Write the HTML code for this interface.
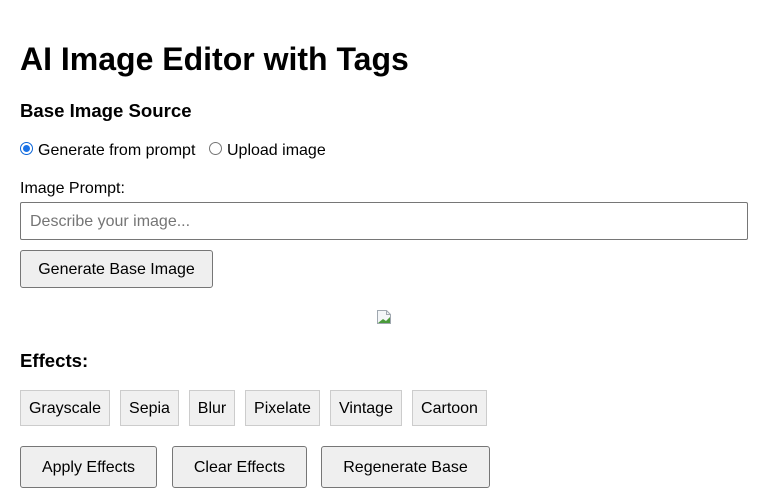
<!DOCTYPE html>
<html><head><meta charset="utf-8"><style>
*{box-sizing:border-box;margin:0;padding:0}
body{width:768px;height:480px;overflow:hidden;background:#fff;font-family:"Liberation Sans",Arial,sans-serif;color:#000;position:relative}
.a{position:absolute;white-space:nowrap}
h1{font-size:32px;font-weight:bold}
h2{font-size:18.6px;font-weight:bold}
.t{font-size:16px}
.btn{position:absolute;background:#efefef;border:1px solid #767676;border-radius:3px;font-size:16px;display:flex;align-items:center;justify-content:center;padding-top:2px}
.tag{position:absolute;background:#f0f0f0;border:1px solid #ccc;font-size:16px;display:flex;align-items:center;justify-content:center;top:390px;height:36px;padding-top:2px}
.radio{position:absolute;width:13px;height:13px;border-radius:50%;border:1px solid #767676;background:#fff}
</style></head><body>
<h1 class="a" style="left:20px;top:41px">AI Image Editor with Tags</h1>
<h2 class="a" style="left:20px;top:100px">Base Image Source</h2>
<div class="radio" style="left:20px;top:142px;border:1px solid #0b65d8;"><div style="position:absolute;left:2px;top:2px;width:7px;height:7px;border-radius:50%;background:#1a73e8"></div></div>
<div class="a t" style="left:38px;top:142px">Generate from prompt</div>
<div class="radio" style="left:209px;top:142px"></div>
<div class="a t" style="left:227px;top:142px">Upload image</div>
<div class="a t" style="left:20px;top:180px">Image Prompt:</div>
<div class="a" style="left:20px;top:202px;width:728px;height:38px;border:1px solid #767676;border-radius:2px"></div>
<div class="a t" style="left:30px;top:213px;color:#757575">Describe your image...</div>
<div class="btn" style="left:20px;top:250px;width:193px;height:38px">Generate Base Image</div>
<svg class="a" style="left:376px;top:309px" width="16" height="16" viewBox="0 0 16 16"><path d="M1.5 1.5h9l4 4v9h-13z" fill="#f4f6f8" stroke="#a0a8b0"/><path d="M2 14l5-4 3 2 4-4v6z" fill="#4a9a3a"/><path d="M10.5 1.5v4h4" fill="none" stroke="#a0a8b0"/></svg>
<h2 class="a" style="left:20px;top:350px">Effects:</h2>
<div class="tag" style="left:20px;width:90px">Grayscale</div>
<div class="tag" style="left:120px;width:59px">Sepia</div>
<div class="tag" style="left:189px;width:46px">Blur</div>
<div class="tag" style="left:245px;width:75px">Pixelate</div>
<div class="tag" style="left:330px;width:72px">Vintage</div>
<div class="tag" style="left:412px;width:75px">Cartoon</div>
<div class="btn" style="left:20px;top:446px;width:137px;height:42px">Apply Effects</div>
<div class="btn" style="left:172px;top:446px;width:135px;height:42px">Clear Effects</div>
<div class="btn" style="left:321px;top:446px;width:169px;height:42px">Regenerate Base</div>
</body></html>
